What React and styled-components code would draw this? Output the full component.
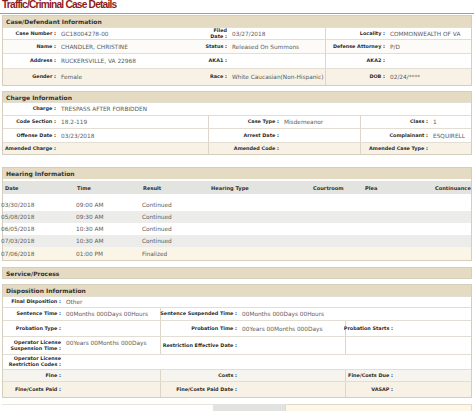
import React from "react";
import styled, { createGlobalStyle } from "styled-components";

const GlobalStyle = createGlobalStyle`
  * {
    box-sizing: border-box;
  }
  body {
    margin: 0;
    background: #ffffff;
    font-family: "DejaVu Sans", Verdana, sans-serif;
  }
`;

const Page = styled.div`
  width: 474px;
  height: 411px;
  overflow: hidden;
`;

const Title = styled.h1`
  margin: 0;
  height: 14px;
  padding-left: 2px;
  font-family: "Liberation Sans", Arial, sans-serif;
  font-size: 10.2px;
  line-height: 10px;
  font-weight: bold;
  letter-spacing: -0.8px;
  color: #8e1b1b;
  border-bottom: 1px solid #a89c8e;
`;

const Panel = styled.section`
  margin: ${(p) => p.$gap}px 2px 0;
  border: 1px solid #d6cebd;
`;

const PanelHeader = styled.div`
  height: ${(p) => p.$h}px;
  display: flex;
  align-items: center;
  padding-left: 3px;
  background: #e5dbc3;
  font-size: 6px;
  font-weight: bold;
  color: #333333;
`;

const Row = styled.div`
  display: grid;
  grid-template-columns: ${(p) => p.$cols};
  height: ${(p) => p.$h}px;
  background: ${(p) => p.$bg || "#ffffff"};
  border-top: 1px solid #e3ded3;
`;

const Label = styled.div`
  display: flex;
  align-items: center;
  justify-content: flex-end;
  padding-right: 2px;
  text-align: right;
  font-size: 4.9px;
  line-height: 5.6px;
  font-weight: bold;
  color: #2b2b2b;
  white-space: nowrap;
  border-left: ${(p) => (p.$divider ? "1px solid #ddd6c8" : "none")};
`;

const Value = styled.div`
  display: flex;
  align-items: ${(p) => (p.$top ? "flex-start" : "center")};
  padding-top: ${(p) => (p.$top ? `${p.$top}px` : "0")};
  padding-left: 3px;
  font-size: 5.8px;
  color: #5c5c5c;
  white-space: nowrap;
  overflow: hidden;
  grid-column: ${(p) => (p.$span ? `span ${p.$span}` : "auto")};
`;

const HearingHead = styled.div`
  display: grid;
  grid-template-columns: 73px 66px 68px 102px 52px 70px 1fr;
  height: 13px;
  margin: 2px 0 5px;
  background: #e3e3e0;
`;

const HeadCell = styled.div`
  display: flex;
  align-items: center;
  justify-content: ${(p) => (p.$right ? "flex-end" : "flex-start")};
  padding-left: ${(p) => p.$pad ?? 1}px;
  padding-right: ${(p) => (p.$right ? 1 : 0)}px;
  font-size: 5.1px;
  font-weight: bold;
  color: #2f2f2f;
  white-space: nowrap;
`;

const HearingRow = styled.div`
  display: grid;
  grid-template-columns: 73px 66px 68px 102px 52px 70px 1fr;
  height: ${(p) => p.$h}px;
  background: ${(p) => p.$bg};
`;

const Cell = styled.div`
  display: flex;
  align-items: center;
  margin-left: ${(p) => p.$shift ?? 0}px;
  font-size: 5.8px;
  color: #5c5c5c;
  white-space: nowrap;
`;

const BottomBar = styled.div`
  display: flex;
  height: 10px;
  margin: 6px 2px 0;
`;

const BarBlank = styled.div`
  flex: 0 0 211px;
  border-top: 1px solid #e8e4dc;
`;

const BarTab = styled.div`
  flex: 0 0 72px;
  background: #e2e2e0;
`;

const BarBox = styled.div`
  flex: 1;
  background: #fcf7e8;
  border: 1px solid #e2dac6;
  border-bottom: none;
`;

const CASE_COLS = "55px 145px 26px 96px 62px 1fr";
const CHARGE_COLS = "55px 150px 73px 79px 70px 1fr";
const DISP_COLS = "60px 97px 79px 106px 50px 1fr";

const hearings = [
  { date: "03/30/2018", time: "09:00 AM", result: "Continued", bg: "#ffffff", h: 12 },
  { date: "05/08/2018", time: "09:30 AM", result: "Continued", bg: "#ececea", h: 12 },
  { date: "06/05/2018", time: "10:30 AM", result: "Continued", bg: "#ffffff", h: 12 },
  { date: "07/03/2018", time: "10:30 AM", result: "Continued", bg: "#ececea", h: 12 },
  { date: "07/06/2018", time: "01:00 PM", result: "Finalized", bg: "#faf5e6", h: 13 },
];

export default function App() {
  return (
    <Page>
      <GlobalStyle />
      <Title>Traffic/Criminal Case Details</Title>

      <Panel $gap={1}>
        <PanelHeader $h={11}>Case/Defendant Information</PanelHeader>
        <Row $cols={CASE_COLS} $h={12}>
          <Label>Case Number :</Label>
          <Value>GC18004278-00</Value>
          <Label>
            Filed
            <br />
            Date :
          </Label>
          <Value>03/27/2018</Value>
          <Label $divider>Locality :</Label>
          <Value>COMMONWEALTH OF VA</Value>
        </Row>
        <Row $cols={CASE_COLS} $h={14} $bg="#fcfbf8">
          <Label>Name :</Label>
          <Value>CHANDLER, CHRISTINE</Value>
          <Label>Status :</Label>
          <Value>Released On Summons</Value>
          <Label $divider>Defense Attorney :</Label>
          <Value>P/D</Value>
        </Row>
        <Row $cols={CASE_COLS} $h={15}>
          <Label>Address :</Label>
          <Value>RUCKERSVILLE, VA 22968</Value>
          <Label>AKA1 :</Label>
          <Value />
          <Label $divider>AKA2 :</Label>
          <Value />
        </Row>
        <Row $cols={CASE_COLS} $h={17} $bg="#f7f2e5">
          <Label>Gender :</Label>
          <Value>Female</Value>
          <Label>Race :</Label>
          <Value>White Caucasian(Non-Hispanic)</Value>
          <Label $divider>DOB :</Label>
          <Value>02/24/****</Value>
        </Row>
      </Panel>

      <Panel $gap={5}>
        <PanelHeader $h={10}>Charge Information</PanelHeader>
        <Row $cols={CHARGE_COLS} $h={13}>
          <Label>Charge :</Label>
          <Value $span={5}>TRESPASS AFTER FORBIDDEN</Value>
        </Row>
        <Row $cols={CHARGE_COLS} $h={13}>
          <Label>Code Section :</Label>
          <Value>18.2-119</Value>
          <Label $divider>Case Type :</Label>
          <Value>Misdemeanor</Value>
          <Label $divider>Class :</Label>
          <Value>1</Value>
        </Row>
        <Row $cols={CHARGE_COLS} $h={14}>
          <Label>Offense Date :</Label>
          <Value>03/23/2018</Value>
          <Label $divider>Arrest Date :</Label>
          <Value />
          <Label $divider>Complainant :</Label>
          <Value>ESQUIRELL</Value>
        </Row>
        <Row $cols={CHARGE_COLS} $h={12} $bg="#f7f2e5">
          <Label>Amended Charge :</Label>
          <Value />
          <Label $divider>Amended Code :</Label>
          <Value />
          <Label $divider>Amended Case Type :</Label>
          <Value />
        </Row>
      </Panel>

      <Panel $gap={12}>
        <PanelHeader $h={11}>Hearing Information</PanelHeader>
        <HearingHead>
          <HeadCell $pad={2}>Date</HeadCell>
          <HeadCell>Time</HeadCell>
          <HeadCell>Result</HeadCell>
          <HeadCell>Hearing Type</HeadCell>
          <HeadCell>Courtroom</HeadCell>
          <HeadCell>Plea</HeadCell>
          <HeadCell $right>Continuance</HeadCell>
        </HearingHead>
        {hearings.map((h) => (
          <HearingRow key={h.date} $bg={h.bg} $h={h.h}>
            <Cell $shift={-2}>{h.date}</Cell>
            <Cell>{h.time}</Cell>
            <Cell>{h.result}</Cell>
            <Cell />
            <Cell />
            <Cell />
            <Cell />
          </HearingRow>
        ))}
      </Panel>

      <Panel $gap={6}>
        <PanelHeader $h={10}>Service/Process</PanelHeader>
      </Panel>

      <Panel $gap={5}>
        <PanelHeader $h={11}>Disposition Information</PanelHeader>
        <Row $cols={DISP_COLS} $h={11}>
          <Label>Final Disposition :</Label>
          <Value $span={5}>Other</Value>
        </Row>
        <Row $cols={DISP_COLS} $h={13}>
          <Label>Sentence Time :</Label>
          <Value>00Months 000Days 00Hours</Value>
          <Label $divider>Sentence Suspended Time :</Label>
          <Value $span={3}>00Months 000Days 00Hours</Value>
        </Row>
        <Row $cols={DISP_COLS} $h={16}>
          <Label>Probation Type :</Label>
          <Value />
          <Label $divider>Probation Time :</Label>
          <Value>00Years 00Months 000Days</Value>
          <Label $divider>Probation Starts :</Label>
          <Value />
        </Row>
        <Row $cols={DISP_COLS} $h={18}>
          <Label>
            Operator License
            <br />
            Suspension Time :
          </Label>
          <Value $top={3}>00Years 00Months 000Days</Value>
          <Label $divider>Restriction Effective Date :</Label>
          <Value />
          <Label $divider />
          <Value />
        </Row>
        <Row $cols={DISP_COLS} $h={15}>
          <Label>
            Operator License
            <br />
            Restriction Codes :
          </Label>
          <Value $span={5} />
        </Row>
        <Row $cols={DISP_COLS} $h={12} $bg="#f6f4ee">
          <Label>Fine :</Label>
          <Value />
          <Label $divider>Costs :</Label>
          <Value />
          <Label $divider>Fine/Costs Due :</Label>
          <Value />
        </Row>
        <Row $cols={DISP_COLS} $h={16} $bg="#f7f2e5">
          <Label>Fine/Costs Paid :</Label>
          <Value />
          <Label $divider>Fine/Costs Paid Date :</Label>
          <Value />
          <Label $divider>VASAP :</Label>
          <Value />
        </Row>
      </Panel>

      <BottomBar>
        <BarBlank />
        <BarTab />
        <BarBox />
      </BottomBar>
    </Page>
  );
}
